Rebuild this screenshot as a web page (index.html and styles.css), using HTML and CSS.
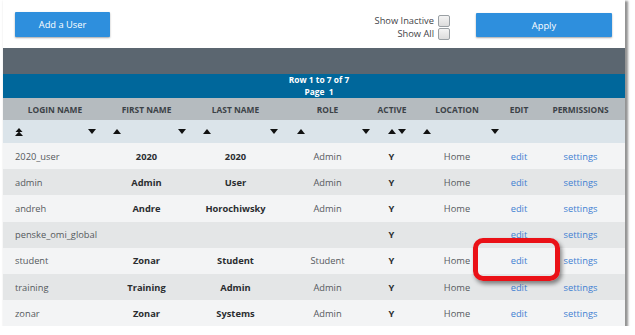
FILE: index.html
```html
<!DOCTYPE html>
<html>
<head>
<meta charset="utf-8">
<link rel="stylesheet" href="styles.css">
</head>
<body>
<div class="frame">
  <div class="toolbar">
    <button class="btn btn-add">Add a User</button>
    <div class="right-tools">
      <div class="checks">
        <label class="check">Show Inactive <span class="box"></span></label>
        <label class="check">Show All <span class="box"></span></label>
      </div>
      <button class="btn btn-apply">Apply</button>
    </div>
  </div>
  <div class="darkband"></div>
  <div class="blueband">
    <div>Row 1 to 7 of 7</div>
    <div>Page&nbsp; 1</div>
  </div>
  <table class="grid">
    <colgroup>
      <col class="c1"><col class="c2"><col class="c3"><col class="c4"><col class="c5"><col class="c6"><col class="c7"><col class="c8">
    </colgroup>
    <thead>
      <tr class="head">
        <th>LOGIN NAME</th><th>FIRST NAME</th><th>LAST NAME</th><th>ROLE</th><th>ACTIVE</th><th>LOCATION</th><th>EDIT</th><th>PERMISSIONS</th>
      </tr>
      <tr class="sort">
        <td><div class="arrows s1"><svg width="8" height="8" viewBox="0 0 8 8"><polygon points="0.5,4 4,0 7.5,4"/><polygon points="0,8 4,3.5 8,8"/></svg><svg width="8" height="5" viewBox="0 0 8 5"><polygon points="0,0 8,0 4,5"/></svg></div></td>
        <td><div class="arrows s2"><svg width="8" height="5" viewBox="0 0 8 5"><polygon points="0,5 8,5 4,0"/></svg><svg width="8" height="5" viewBox="0 0 8 5"><polygon points="0,0 8,0 4,5"/></svg></div></td>
        <td><div class="arrows s3"><svg width="8" height="5" viewBox="0 0 8 5"><polygon points="0,5 8,5 4,0"/></svg><svg width="8" height="5" viewBox="0 0 8 5"><polygon points="0,0 8,0 4,5"/></svg></div></td>
        <td><div class="arrows s4"><svg width="8" height="5" viewBox="0 0 8 5"><polygon points="0,5 8,5 4,0"/></svg><svg width="8" height="5" viewBox="0 0 8 5"><polygon points="0,0 8,0 4,5"/></svg></div></td>
        <td><div class="arrows s5"><svg width="8" height="5" viewBox="0 0 8 5"><polygon points="0,5 8,5 4,0"/></svg><svg width="8" height="5" viewBox="0 0 8 5"><polygon points="0,0 8,0 4,5"/></svg></div></td>
        <td><div class="arrows s6"><svg width="8" height="5" viewBox="0 0 8 5"><polygon points="0,5 8,5 4,0"/></svg><svg width="8" height="5" viewBox="0 0 8 5"><polygon points="0,0 8,0 4,5"/></svg></div></td>
        <td></td>
        <td></td>
      </tr>
    </thead>
    <tbody>
      <tr><td class="login">2020_user</td><td class="b">2020</td><td class="b">2020</td><td>Admin</td><td class="b y">Y</td><td>Home</td><td><a>edit</a></td><td><a>settings</a></td></tr>
      <tr><td class="login">admin</td><td class="b">Admin</td><td class="b">User</td><td>Admin</td><td class="b y">Y</td><td>Home</td><td><a>edit</a></td><td><a>settings</a></td></tr>
      <tr><td class="login">andreh</td><td class="b">Andre</td><td class="b">Horochiwsky</td><td>Admin</td><td class="b y">Y</td><td>Home</td><td><a>edit</a></td><td><a>settings</a></td></tr>
      <tr><td class="login">penske_omi_global</td><td class="b"></td><td class="b"></td><td></td><td class="b y">Y</td><td></td><td><a>edit</a></td><td><a>settings</a></td></tr>
      <tr><td class="login">student</td><td class="b">Zonar</td><td class="b">Student</td><td>Student</td><td class="b y">Y</td><td>Home</td><td><a>edit</a></td><td><a>settings</a></td></tr>
      <tr><td class="login">training</td><td class="b">Training</td><td class="b">Admin</td><td>Admin</td><td class="b y">Y</td><td>Home</td><td><a>edit</a></td><td><a>settings</a></td></tr>
      <tr><td class="login">zonar</td><td class="b">Zonar</td><td class="b">Systems</td><td>Admin</td><td class="b y">Y</td><td>Home</td><td><a>edit</a></td><td><a>settings</a></td></tr>
    </tbody>
  </table>
  <div class="highlight"></div>
</div>
</body>
</html>
```
FILE: styles.css
```css
html, body {
  margin: 0;
  padding: 0;
  background: #ffffff;
}
body {
  font-family: "Open Sans", "Liberation Sans", sans-serif;
  font-size: 9.3px;
  color: #555a5e;
}
.frame {
  position: relative;
  margin-left: 3px;
  width: 622px;
  background: #ffffff;
  box-shadow: 2px 2px 2px 1px rgba(60, 60, 60, 0.55);
}
.toolbar {
  height: 48px;
  display: flex;
  align-items: center;
  justify-content: space-between;
  padding: 0 13px 0 12px;
  box-sizing: border-box;
}
.btn {
  font-family: "Open Sans", "Liberation Sans", sans-serif;
  font-size: 9.3px;
  color: #ffffff;
  background: #2e8fdd;
  border: none;
  border-radius: 1px;
  box-shadow: 0 1px 2px rgba(0, 0, 0, 0.35);
  padding: 0;
}
.btn-add {
  width: 95px;
  height: 25px;
  margin-top: 1px;
}
.btn-apply {
  width: 136px;
  height: 24px;
  margin-top: 2px;
}
.right-tools {
  display: flex;
  align-items: center;
  gap: 26px;
}
.checks {
  display: flex;
  flex-direction: column;
  align-items: flex-end;
  gap: 1px;
  margin-top: 7px;
}
.check {
  display: flex;
  align-items: center;
  gap: 4px;
  height: 12px;
  line-height: 12px;
  color: #3f4347;
}
.box {
  display: inline-block;
  width: 10px;
  height: 10px;
  border: 1px solid #9aa0a4;
  border-radius: 2px;
  background: linear-gradient(#f4f4f4, #dcdcdc);
}
.darkband {
  height: 26px;
  background: #5b6670;
}
.blueband {
  height: 24px;
  background: #00679b;
  color: #ffffff;
  font-weight: bold;
  font-size: 8.4px;
  line-height: 12px;
  text-align: center;
  padding-left: 10px;
  box-sizing: border-box;
}
.grid {
  width: 622px;
  border-collapse: collapse;
  table-layout: fixed;
}
.c1 { width: 102px; }
.c2 { width: 83px; }
.c3 { width: 95px; }
.c4 { width: 89px; }
.c5 { width: 40px; }
.c6 { width: 90px; }
.c7 { width: 34px; }
.c8 { width: 89px; }
.grid td, .grid th {
  padding: 0;
  text-align: center;
  white-space: nowrap;
  overflow: visible;
}
.head {
  height: 22px;
  background: #b5bbbf;
}
.head th {
  font-size: 8.4px;
  font-weight: bold;
  color: #3c4247;
}
.head th:first-child {
  padding-left: 2px;
}
.sort {
  height: 23px;
  background: #dbe4ea;
}
.arrows {
  display: flex;
  justify-content: space-between;
  align-items: center;
}
.arrows svg { fill: #111; display: block; }
.s1 { padding: 0 9px 0 12px; }
.s2 { padding: 0 2px 0 8px; }
.s3 { padding: 0 5px 0 15px; }
.s4 { padding: 0 2px 0 14px; }
.s5 { justify-content: flex-start; gap: 2px; padding-left: 16px; }
.s6 { padding: 0 3px 0 11px; }
tbody tr {
  height: 26.2px;
}
tbody tr:nth-child(odd) { background: #f3f4f5; }
tbody tr:nth-child(even) { background: #e4e6e7; }
tbody td { color: #55595d; }
tbody td.login {
  text-align: left;
  padding-left: 12px;
}
tbody td.b {
  font-weight: bold;
  color: #2a2d30;
}
tbody td.y { padding-right: 1px; }
tbody a {
  color: #3f80d2;
  text-decoration: none;
}
.highlight {
  position: absolute;
  left: 470px;
  top: 238px;
  width: 77px;
  height: 33px;
  border: 5px solid #ea1117;
  border-radius: 10px;
  box-shadow: 2px 3px 4px rgba(0, 0, 0, 0.45);
}
```
